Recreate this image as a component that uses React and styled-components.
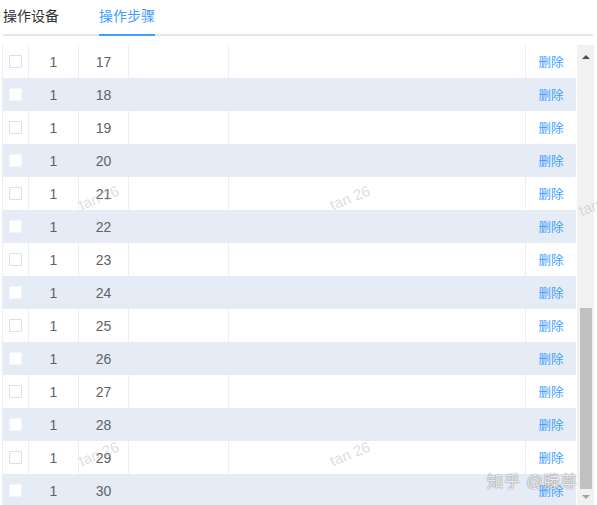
import React from 'react'
import styled, { createGlobalStyle } from 'styled-components'

const GlobalStyle = createGlobalStyle`
  html, body {
    margin: 0;
    padding: 0;
    background: #fff;
  }
  body {
    font-family: "Liberation Sans", "Noto Sans CJK SC", Arial, sans-serif;
    width: 597px;
    height: 505px;
    overflow: hidden;
  }
`

const rows = [17, 18, 19, 20, 21, 22, 23, 24, 25, 26, 27, 28, 29, 30]

const columns = [26, 50, 50, 100, 297, 50]

const watermarks = [
  { x: 78, y: 189 },
  { x: 329, y: 189 },
  { x: 578, y: 195 },
  { x: 78, y: 445 },
  { x: 329, y: 445 }
]

const Page = styled.div`
  position: relative;
  height: 505px;
  overflow: hidden;
`

const TabBar = styled.div`
  display: flex;
  gap: 40px;
  margin: 0 4px 0 3px;
  height: 34px;
  border-bottom: 2px solid #e4e7ed;
`

const Tab = styled.div`
  font-size: 14px;
  line-height: 32px;
  color: ${(p) => (p.active ? '#409eff' : '#303133')};
  border-bottom: 2px solid ${(p) => (p.active ? '#409eff' : 'transparent')};
  margin-bottom: -2px;
`

const Body = styled.div`
  display: flex;
  margin-top: 9px;
  padding-left: 2px;
  gap: 1px;
`

const Table = styled.div`
  width: 573px;
  border-left: 1px solid #ebeef5;
`

const Row = styled.div`
  display: grid;
  grid-template-columns: ${columns.map((c) => `${c}px`).join(' ')};
  height: 33px;
  background: ${(p) => (p.striped ? '#e5ecf5' : '#fff')};
`

const Cell = styled.div`
  display: flex;
  align-items: center;
  justify-content: center;
  font-size: 14px;
  color: #606266;
  border-right: 1px solid ${(p) => (p.striped ? '#e5ecf5' : '#ebeef5')};
  &:last-child {
    border-right: none;
  }
`

const Check = styled.span`
  width: 13px;
  height: 13px;
  box-sizing: border-box;
  border: 1px solid ${(p) => (p.striped ? '#f2f5f9' : '#dcdfe6')};
  background: #fff;
  border-radius: 1px;
  margin-left: -1px;
`

const Link = styled.span`
  font-size: 12.5px;
  color: #409eff;
`

const Scrollbar = styled.div`
  width: 17px;
  height: 460px;
  background: #f1f1f1;
  display: flex;
  flex-direction: column;
  align-items: center;
`

const Arrow = styled.div`
  width: 0;
  height: 0;
  border-left: 4px solid transparent;
  border-right: 4px solid transparent;
  ${(p) => (p.down ? 'border-top: 4px solid #a3a3a3;' : 'border-bottom: 4px solid #505050;')}
  margin: ${(p) => (p.down ? '6px 0 6px' : '10px 0 0')};
`

const Thumb = styled.div`
  width: 12px;
  margin-top: 249px;
  flex: 1;
  background: #c1c1c1;
`

const Watermark = styled.div`
  position: absolute;
  font-size: 15px;
  color: rgba(170, 170, 170, 0.4);
  transform: rotate(-22deg);
  white-space: nowrap;
  pointer-events: none;
`

const Credit = styled.div`
  position: absolute;
  left: 487px;
  top: 468px;
  font-size: 16px;
  color: rgba(255, 255, 255, 0.85);
  text-shadow: 0 0 1px rgba(80, 80, 80, 0.7), 0 0 2px rgba(120, 120, 120, 0.5);
  letter-spacing: 1px;
  white-space: nowrap;
`

export default function App() {
  return (
    <Page>
      <GlobalStyle />
      <TabBar>
        <Tab>操作设备</Tab>
        <Tab active>操作步骤</Tab>
      </TabBar>
      <Body>
        <Table>
          {rows.map((n, i) => {
            const striped = i % 2 === 1
            return (
              <Row key={n} striped={striped}>
                <Cell striped={striped}>
                  <Check striped={striped} />
                </Cell>
                <Cell striped={striped}>1</Cell>
                <Cell striped={striped}>{n}</Cell>
                <Cell striped={striped} />
                <Cell striped={striped} />
                <Cell striped={striped}>
                  <Link>删除</Link>
                </Cell>
              </Row>
            )
          })}
        </Table>
        <Scrollbar>
          <Arrow />
          <Thumb />
          <Arrow down />
        </Scrollbar>
      </Body>
      {watermarks.map((w, i) => (
        <Watermark key={i} style={{ left: w.x, top: w.y }}>tan 26</Watermark>
      ))}
      <Credit>知乎 @滕尊</Credit>
    </Page>
  )
}
